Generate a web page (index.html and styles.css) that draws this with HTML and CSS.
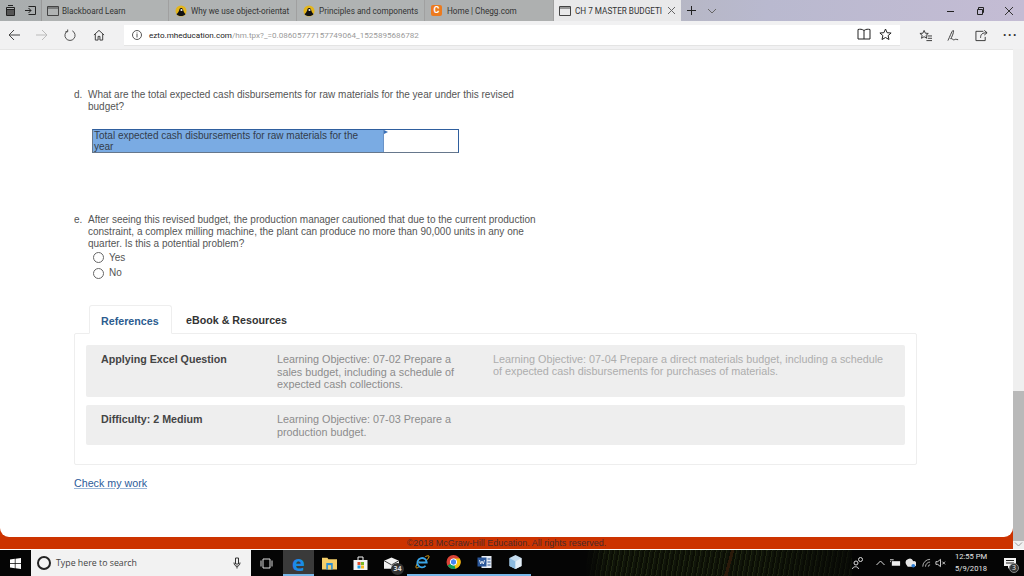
FILE: index.html
```html
<!DOCTYPE html>
<html lang="en">
<head>
<meta charset="utf-8">
<title>CH 7 MASTER BUDGETI</title>
<link rel="stylesheet" href="styles.css">
</head>
<body>
<header class="tabbar">
  <div class="sys">
    <svg class="ic14" viewBox="0 0 11 11"><path d="M1.500 2.500h8v8h-8zM1.500 4.500h8M3 .5h5" fill="none" stroke="#222"/><path d="M2 5h7v5H2z" fill="#555"/></svg>
    <svg class="ic14" viewBox="0 0 11 11"><path d="M3.500 1.500h7v8h-7M0 5.500h6M3.500 3 6 5.500 3.500 8" fill="none" stroke="#222"/></svg>
  </div>
  <div class="tab t1"><svg class="pg" viewBox="0 0 12 10"><path d="M.5.500h11v9H.500zM.5 2h11" fill="none" stroke="#444"/></svg><span>Blackboard Learn</span></div>
  <div class="tab t2"><svg class="fav" viewBox="0 0 12 12"><circle cx="6" cy="6" r="5.500" fill="#e3b51c"/><path d="M1.500 9C3 8 4 6.500 4.500 4 5.500 2.500 7.500 3 8 4.500 8.500 6.500 9.500 8 10.500 9 9 11.800 3 11.800 1.500 9z" fill="#111"/><circle cx="6.500" cy="5" r="1.100" fill="#eee"/></svg><span>Why we use object-orientat</span></div>
  <div class="tab t3"><svg class="fav" viewBox="0 0 12 12"><circle cx="6" cy="6" r="5.500" fill="#e3b51c"/><path d="M1.500 9C3 8 4 6.500 4.500 4 5.500 2.500 7.500 3 8 4.500 8.500 6.500 9.500 8 10.500 9 9 11.800 3 11.800 1.500 9z" fill="#111"/><circle cx="6.500" cy="5" r="1.100" fill="#eee"/></svg><span>Principles and components</span></div>
  <div class="tab t4"><span class="chegg">C</span><span>Home | Chegg.com</span></div>
  <div class="tab active"><svg class="pg" viewBox="0 0 12 10"><path d="M.5.500h11v9H.500zM.5 2h11" fill="none" stroke="#444"/></svg><span class="clip">CH 7 MASTER BUDGETI</span><svg class="close" viewBox="0 0 9 9"><path d="M1 1l7 7M8 1 1 8" stroke="#666" fill="none"/></svg></div>
  <svg class="plus" viewBox="0 0 11 11"><path d="M5.500 1v9M1 5.500h9" stroke="#222" fill="none"/></svg>
  <svg class="chev" viewBox="0 0 10 6"><path d="M1 1l4 4 4-4" stroke="#666" fill="none"/></svg>
  <div class="winctl">
    <svg class="wc" viewBox="0 0 10 10"><path d="M1 5.500h7" stroke="#222" fill="none"/></svg>
    <svg class="wc" viewBox="0 0 10 10"><path d="M2.500 3.500h5v5h-5z" fill="none" stroke="#222"/><path d="M3.500 3V1.500h5v5H8" fill="none" stroke="#222"/></svg>
    <svg class="wc" viewBox="0 0 10 10"><path d="M1 1l8 8M9 1l-8 8" stroke="#333" fill="none"/></svg>
  </div>
</header>

<nav class="toolbar">
  <svg class="back" viewBox="0 0 12 12"><path d="M12 6H1M6 1 1 6l5 5" fill="none" stroke="#444"/></svg>
  <svg class="fwd" viewBox="0 0 12 12"><path d="M0 6h11M6 1l5 5-5 5" fill="none" stroke="#bbb"/></svg>
  <svg class="refresh" viewBox="0 0 13 13"><path d="M4 2a5.500 5.500 0 1 0 5 0M4 .5V3H1.500" fill="none" stroke="#444"/></svg>
  <svg class="home" viewBox="0 0 13 13"><path d="M1 6.500 6.500 1.500 12 6.500M2.500 5.500v6.500h3V8h2v4h3V5.500" fill="none" stroke="#333"/></svg>
  <div class="address">
    <svg class="info" viewBox="0 0 10 10"><circle cx="5" cy="5" r="4.500" fill="none" stroke="#555"/><path d="M5 4v3.500M5 2.500v1" stroke="#555"/></svg>
    <span class="url"><span class="host">ezto.mheducation.com</span>/hm.tpx?_=0.08605777157749064_1525895686782</span>
    <svg class="book" viewBox="0 0 14 13"><path d="M7 2.500C5 1 3 1 1 1.500v9.500h12V1.500C11 1 9 1 7 2.500v8.500" fill="none" stroke="#222"/></svg>
    <svg class="star" viewBox="0 0 13 13"><path d="M6.500 1l1.600 3.700 4 .3-3 2.600.9 3.900-3.500-2-3.500 2 .9-3.900-3-2.600 4-.3z" fill="none" stroke="#222"/></svg>
  </div>
  <div class="tools">
    <svg class="tool" viewBox="0 0 14 13"><path d="M5.500 1l1.300 3 3.200.3-2.400 2 .7 3.200-2.800-1.700-2.800 1.700.7-3.200-2.400-2L4.200 4z" fill="none" stroke="#333"/><path d="M9 7h5M9.500 9.500h4.500M8 12h6" stroke="#333"/></svg>
    <svg class="tool" viewBox="0 0 14 13"><path d="M1 12C3 8 5 2 6.500 1 8 1 6 7 4 10M4 10c2-1 2 2 4 1s2 0 4 0" fill="none" stroke="#333"/></svg>
    <svg class="tool" viewBox="0 0 14 13"><path d="M9 2h-8v10h10V8M6 9c0-4 2-5.500 7-5.500M10 1l3 2.500L10 6" fill="none" stroke="#333"/></svg>
    <span class="more">···</span>
  </div>
</nav>

<div class="viewport">
  <div class="frame">
    <main class="page">
      <div class="question q-d">
        <span class="letter">d.</span>
        <p>What are the total expected cash disbursements for raw materials for the year under this revised budget?</p>
      </div>
      <div class="answer">
        <div class="answer-label">Total expected cash disbursements for raw materials for the year</div>
        <div class="answer-input"><span class="flag"></span></div>
      </div>
      <div class="question q-e">
        <span class="letter">e.</span>
        <p>After seeing this revised budget, the production manager cautioned that due to the current production constraint, a complex milling machine, the plant can produce no more than 90,000 units in any one quarter. Is this a potential problem?</p>
      </div>
      <div class="choices">
        <label class="choice"><span class="radio"></span>Yes</label>
        <label class="choice"><span class="radio"></span>No</label>
      </div>
      <div class="reftabs">
        <div class="reftab on">References</div>
        <div class="reftab">eBook &amp; Resources</div>
      </div>
      <section class="refpanel">
        <div class="refrow r1">
          <div class="c-title">Applying Excel Question</div>
          <div class="c-obj">Learning Objective: 07-02 Prepare a sales budget, including a schedule of expected cash collections.</div>
          <div class="c-obj2">Learning Objective: 07-04 Prepare a direct materials budget, including a schedule of expected cash disbursements for purchases of materials.</div>
        </div>
        <div class="refrow r2">
          <div class="c-title">Difficulty: 2 Medium</div>
          <div class="c-obj">Learning Objective: 07-03 Prepare a production budget.</div>
        </div>
      </section>
      <a class="check" href="#">Check my work</a>
    </main>
    <footer class="copy">©2018 McGraw-Hill Education. All rights reserved.</footer>
  </div>
  <aside class="scroll">
    <div class="track"></div>
    <div class="thumb"></div>
    <svg class="sdown" viewBox="0 0 9 5"><path d="M1 .5l3.500 3.500L8 .5" fill="none" stroke="#999"/></svg>
  </aside>
</div>

<footer class="taskbar">
  <div class="start"><svg class="winlogo" viewBox="0 0 11 11"><path d="M0 1.500 4.800.8v4.400H0zM5.500.7 11 0v5.200H5.500zM0 5.900h4.800v4.300L0 9.500zM5.500 5.900H11V11l-5.500-.8z" fill="#fff"/></svg></div>
  <div class="search">
    <span class="ring"></span>
    <span class="stext">Type here to search</span>
    <svg class="mic" viewBox="0 0 8 12"><path d="M2.500 1h3v6h-3zM1 5.500c0 5 6 5 6 0M4 9v2.500" fill="none" stroke="#333"/></svg>
  </div>
  <svg class="taskview" viewBox="0 0 13 11"><path d="M3 1h7v9H3zM1 2.500V8.500M12 2.500V8.500" fill="none" stroke="#ddd"/></svg>
  <div class="apps">
    <div class="app on"><span class="edge">e</span></div>
    <div class="app"><svg class="a15" viewBox="0 0 14 12"><path d="M0 1h5l1 1.500h8V12H0z" fill="#f5cf6a"/><path d="M4 6h6v6H4z" fill="#2c8fd6"/><path d="M5.500 8h3v4h-3z" fill="#f5cf6a"/></svg></div>
    <div class="app"><svg class="a15" viewBox="0 0 14 14"><path d="M0 4h14v10H0z" fill="#f4f4f4"/><path d="M4.500 4V1h5v3" fill="none" stroke="#f4f4f4"/><path d="M4 6h3v3H4z" fill="#e2502c"/><path d="M7.500 6h3v3h-3z" fill="#7bb928"/><path d="M4 9.500h3v3H4z" fill="#1c9ee6"/><path d="M7.500 9.500h3v3h-3z" fill="#f7b81e"/></svg></div>
    <div class="app mail"><svg class="a15" viewBox="0 0 16 12"><path d="M0 3.500 8 0l8 3.500V12H0z" fill="#f1f1f1"/><path d="M0 3.500 8 8l8-4.500" fill="none" stroke="#333"/></svg><span class="badge">34</span></div>
    <div class="app mark"><svg class="a15" viewBox="0 0 15 15"><path d="M10.500 1.800C12.500.8 14 .6 14.500 1.200 15 2 13.500 4 11 6.800" fill="none" stroke="#f2b01e"/><path d="M3.500 13C2 14 1 14 .5 13.500 0 12.500 1.500 9.500 4 6.500" fill="none" stroke="#f2b01e"/><path d="M3.500 8h8.500a5 5 0 1 0-1.200 3.500" fill="none" stroke="#3aa5e8" stroke-width="2"/></svg></div>
    <div class="app mark"><svg class="a15" viewBox="0 0 14 14"><circle cx="7" cy="7" r="7" fill="#db4437"/><path d="M7 7 1 10.500A7 7 0 0 0 10 13.300z" fill="#0f9d58"/><path d="M7 3.500h6.300A7 7 0 0 1 9 13.700L7 7z" fill="#f4c20d"/><circle cx="7" cy="7" r="3.200" fill="#4285f4" stroke="#fff"/></svg></div>
    <div class="app mark"><svg class="a15" viewBox="0 0 14 14"><path d="M4 1h10v12H4z" fill="#e8edf5"/><path d="M0 2.500h9v9H0z" fill="#2b579a"/><path d="M2 5l1.200 4L4.500 6l1.300 3L7 5" fill="none" stroke="#fff" stroke-width=".8"/><path d="M10 4h3M10 7h3M10 10h3" stroke="#2b579a"/></svg></div>
    <div class="app mark"><svg class="a15" viewBox="0 0 14 14"><path d="M7 0l6 3v8l-6 3-6-3V3z" fill="#c4dcef"/><path d="M7 6.500V14l-6-3V3z" fill="#8dbbe0"/><path d="M13 3v8l-6 3V6.500z" fill="#e6f0f8"/></svg></div>
  </div>
  <div class="wallpaper"></div>
  <div class="tray">
    <svg class="tr people" viewBox="0 0 12 12"><circle cx="4" cy="6" r="2" fill="none" stroke="#ddd"/><circle cx="8.500" cy="2.500" r="2" fill="none" stroke="#ddd"/><path d="M.5 12c0-3 6-3 6 0" fill="none" stroke="#ddd"/></svg>
    <svg class="tr" viewBox="0 0 11 10"><path d="M1.500 7l4-4 4 4" fill="none" stroke="#ddd"/></svg>
    <svg class="tr" viewBox="0 0 12 10"><path d="M2 3h9v5H2z" fill="#eee"/><path d="M0 1.500h4M0 3.500h1" stroke="#eee"/></svg>
    <svg class="tr" viewBox="0 0 12 10"><path d="M1 6a4 4 0 0 1 8-3 3 3 0 0 1 1 6H3z" fill="#e6e6e6"/><circle cx="9" cy="8" r="2" fill="#2b7cd3"/></svg>
    <svg class="tr" viewBox="0 0 12 10"><path d="M3 9a8 8 0 0 1 8-8M6 9a5 5 0 0 1 5-5M9 9a2 2 0 0 1 2-2" fill="none" stroke="#bbb"/></svg>
    <svg class="tr" viewBox="0 0 12 10"><path d="M1 3.500h2L6 1v8L3 6.500H1z" fill="none" stroke="#ddd"/><path d="M8 3.500l3 3M11 3.500l-3 3" stroke="#ddd"/></svg>
  </div>
  <div class="clock"><span>12:55 PM</span><span>5/9/2018</span></div>
  <div class="notify"><svg class="note" viewBox="0 0 12 11"><path d="M0 0h12v8H6l-2 3V8H0z" fill="#f2f2f2"/><path d="M2 2.500h8M2 5h8" stroke="#222"/></svg><span class="nbadge">3</span></div>
</footer>
</body>
</html>
```

FILE: styles.css
```css
* { box-sizing: border-box; }
html, body { margin: 0; padding: 0; }
body {
  width: 1024px;
  height: 576px;
  overflow: hidden;
  display: flex;
  flex-direction: column;
  font-family: "Liberation Sans", Arial, sans-serif;
  background: #fff;
}

/* browser tab strip */
.tabbar {
  height: 21px;
  flex: none;
  display: flex;
  align-items: center;
  background: linear-gradient(90deg, #a9adae 0%, #b3b5b8 55%, #b9b9cf 75%, #c4bcd4 100%);
  font-family: Roboto, "Noto Sans", sans-serif;
  font-size: 8.200px;
  color: #333;
}
.sys { width: 42px; height: 100%; display: flex; align-items: center; gap: 9px; padding-left: 5px; border-right: 1px solid #999; }
.ic14 { width: 11px; height: 11px; }
.tab { height: 100%; display: flex; align-items: center; white-space: nowrap; overflow: hidden; border-right: 1px solid #a0a0a0; background: #b0b3b3; }
.t1 { width: 127px; padding-left: 5px; gap: 3px; }
.t2 { width: 128px; padding-left: 6px; gap: 4px; }
.t3 { width: 128px; padding-left: 6px; gap: 4px; }
.t4 { width: 129px; padding-left: 6px; gap: 5px; background: #aeb0b0; }
.pg { width: 12px; height: 10px; flex: none; }
.fav { width: 12px; height: 12px; flex: none; }
.chegg { width: 11px; height: 11px; flex: none; background: #ec7a1e; color: #fff; font-weight: 700; font-size: 9px; line-height: 11px; text-align: center; border-radius: 2px; }
.tab.active { width: 127px; background: #e9e9ea; padding-left: 5px; gap: 4px; border-right: 0; }
.clip { width: 88px; }
.close { width: 9px; height: 9px; flex: none; }
.plus { width: 11px; height: 11px; margin-left: 5px; }
.chev { width: 10px; height: 6px; margin-left: 10px; }
.winctl { margin-left: auto; display: flex; align-items: center; gap: 19px; padding-right: 10px; }
.wc { width: 10px; height: 10px; }

/* address bar */
.toolbar {
  height: 28px;
  flex: none;
  display: flex;
  align-items: center;
  background: #f1f1f2;
  padding-left: 8px;
}
.back { width: 12px; height: 12px; }
.fwd { width: 12px; height: 12px; margin-left: 16px; }
.refresh { width: 12px; height: 12px; margin-left: 16px; }
.home { width: 12px; height: 12px; margin-left: 17px; }
.address {
  width: 776px;
  height: 21px;
  margin-left: 19px;
  background: #fff;
  border-bottom: 1px solid #e4e4e4;
  display: flex;
  align-items: center;
  padding-left: 8px;
}
.info { width: 10px; height: 10px; flex: none; }
.url { margin-left: 7px; font-size: 8.100px; color: #9a9a9a; font-family: Roboto, "Noto Sans", sans-serif; }
.host { color: #222; }
.book { width: 14px; height: 13px; margin-left: auto; }
.star { width: 13px; height: 13px; margin-left: 8px; margin-right: 8px; }
.tools { display: flex; align-items: center; gap: 15px; margin-left: 19px; }
.tool { width: 13px; height: 13px; }
.more { font-size: 12px; letter-spacing: 1px; color: #333; font-weight: 700; }

/* main viewport */
.viewport { flex: 1; min-height: 0; display: flex; }
.frame { width: 1013px; display: flex; flex-direction: column; background: #cc3300; }
.page {
  flex: 1;
  min-height: 0;
  background: #fff;
  border-top: 1px solid #e6e6e6;
  border-radius: 0 0 9px 9px;
  padding: 39px 96px 0 74px;
  font-size: 10px;
  line-height: 12px;
  color: #555;
}
.question { display: flex; }
.letter { width: 14px; flex: none; }
.question p { margin: 0; }
.q-d p { width: 432px; }
.q-e { margin-top: 61px; }
.q-e p { width: 452px; }
.answer {
  display: flex;
  width: 367px;
  height: 24px;
  margin: 16px 0 0 18px;
  border: 1px solid #2f5f9e;
  border-left-color: #66778c;
  border-bottom-color: #66778c;
  background: #fff;
}
.answer-label { width: 291px; background: #7aabe3; color: #333c4a; padding: 0 22px 0 1px; line-height: 11px; border-right: 1px solid #6a93c8; }
.answer-input { flex: 1; position: relative; }
.flag { position: absolute; left: 0; top: 0; border-left: 4px solid #3a70b8; border-top: 2.500px solid transparent; border-bottom: 2.500px solid transparent; }
.choices { margin-left: 19px; }
.choice { display: flex; align-items: center; gap: 5px; height: 15.500px; color: #555; }
.radio { width: 11px; height: 11px; border: 1px solid #666; border-radius: 50%; background: #fff; }
.reftabs { display: flex; margin: 24px 0 0 15px; height: 29px; font-size: 10.700px; font-weight: 700; color: #333; position: relative; }
.reftab { height: 29px; padding: 9px 14px 0; line-height: 13px; }
.reftab.on { width: 83px; padding-left: 11px; padding-right: 0; color: #2c5c8f; background: #fff; border: 1px solid #eee; border-bottom: 1px solid #fff; border-radius: 3px 3px 0 0; position: relative; z-index: 1; }
.refpanel { width: 843px; height: 132px; border: 1px solid #eee; border-radius: 2px; padding: 11px 11px 0; margin-top: -1px; }
.refrow { background: #eee; border-radius: 2px; display: flex; font-size: 10.700px; }
.r1 { height: 52px; padding-top: 8px; }
.r2 { height: 40px; margin-top: 8px; padding-top: 8px; }
.c-title { width: 191px; padding-left: 15px; font-weight: 700; color: #444; line-height: 12px; flex: none; }
.c-obj { width: 192px; margin-right: 24px; color: #8c8c8c; flex: none; font-size: 10.800px; line-height: 12.500px; }
.c-obj2 { width: 395px; color: #adadad; font-size: 10.800px; line-height: 12px; }
.check { display: inline-block; margin-top: 12px; font-size: 10.700px; line-height: 13px; color: #2c5c9a; text-decoration: underline; text-decoration-color: #9db8d8; }
.copy { height: 12px; flex: none; font-size: 9px; line-height: 12px; text-align: center; color: #4a2a2a; }

/* scrollbar */
.scroll { width: 11px; position: relative; background: #f0f0f0; }
.track { height: 342px; background: #efefef; }
.thumb { height: 150px; background: #b9b9b9; }
.sdown { position: absolute; left: 1px; bottom: 2px; width: 9px; height: 5px; }

/* Windows taskbar */
.taskbar {
  height: 26px;
  flex: none;
  margin-top: 1px;
  display: flex;
  align-items: center;
  background: #050505;
  font-family: "Open Sans", "Noto Sans", sans-serif;
}
.start { width: 31px; height: 100%; display: flex; align-items: center; justify-content: center; }
.winlogo { width: 11px; height: 11px; }
.search { width: 220px; height: 100%; background: #f2f2f2; display: flex; align-items: center; padding-left: 6px; font-size: 8.800px; color: #444; }
.ring { width: 14px; height: 14px; border: 2px solid #222; border-radius: 50%; flex: none; }
.stext { margin-left: 5px; }
.mic { width: 8px; height: 12px; margin-left: auto; margin-right: 10px; }
.taskview { width: 13px; height: 11px; margin-left: 9px; }
.apps { display: flex; margin-left: 10px; height: 100%; }
.app { width: 31px; height: 100%; display: flex; align-items: center; justify-content: center; position: relative; }
.app.on { background: #3a3a3a; border-bottom: 2px solid #77b7e8; }
.app.mark { border-bottom: 2px solid #77b7e8; }
.edge { color: #1a8ae6; font-size: 22px; font-weight: 700; line-height: 20px; }
.a15 { width: 15px; height: 14px; }
.badge { position: absolute; left: 15px; bottom: 1px; width: 13px; height: 12px; border-radius: 50%; background: #333; color: #ddd; font-size: 7px; line-height: 12px; text-align: center; font-weight: 700; }
.wallpaper {
  flex: 1;
  height: 100%;
  background:
    linear-gradient(105deg, transparent 0 61%, #2c1a0a 61% 62%, transparent 62%),
    linear-gradient(90deg, #050505 0 17%, rgba(5,5,5,0) 24%, rgba(5,5,5,0) 70%, rgba(5,5,5,.6) 100%),
    repeating-linear-gradient(100deg, #0b0e04 0 2px, #1e2610 2px 3px, #10140a 3px 5px);
}
.tray { display: flex; align-items: center; gap: 4px; height: 100%; background: #050505; padding-right: 0; }
.tr { width: 11px; height: 10px; }
.people { width: 12px; height: 12px; margin-right: 7px; }
.clock { width: 50px; display: flex; flex-direction: column; align-items: center; font-family: Roboto, "Noto Sans", sans-serif; font-size: 7.600px; line-height: 12px; color: #e6e6e6; }
.notify { width: 28px; height: 100%; display: flex; align-items: center; justify-content: center; position: relative; }
.note { width: 12px; height: 11px; }
.nbadge { position: absolute; left: 13px; bottom: 3px; width: 10px; height: 10px; border-radius: 50%; background: #333; border: 1px solid #888; color: #eee; font-size: 7px; line-height: 8px; text-align: center; }
```
